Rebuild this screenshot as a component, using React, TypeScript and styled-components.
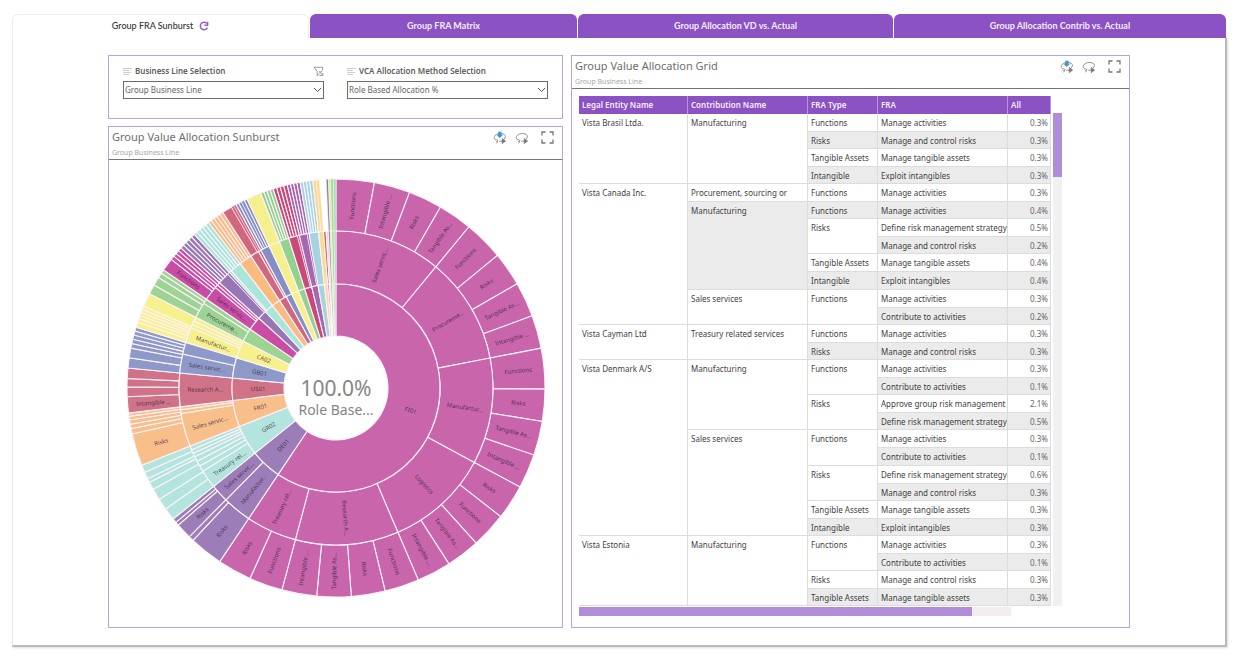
import React from 'react';
import styled, { createGlobalStyle } from 'styled-components';

const sans = '"Noto Sans", "Open Sans", sans-serif';
const purple = '#8a52c3';

const GlobalStyle = createGlobalStyle`
  *, *::before, *::after { box-sizing: border-box; }
  body { margin: 0; background: #fff; font-family: ${sans}; color: #444; }
  button, select { font: inherit; color: inherit; }
`;

const Page = styled.div`
  min-width: 1040px;
  padding: 14px 9px 9px 12px;
`;

const TabBar = styled.nav`
  display: grid;
  grid-template-columns: 297fr 267fr 315fr 332fr;
  gap: 1px;
  padding-right: 1px;
`;

const Tab = styled.button<{ $active?: boolean }>`
  display: flex;
  align-items: center;
  justify-content: center;
  gap: 6px;
  height: 24px;
  padding: 0 0 2px;
  border: 1px solid ${(p) => (p.$active ? '#eeeeee' : purple)};
  border-bottom: 0;
  border-radius: 6px 6px 0 0;
  background: ${(p) => (p.$active ? '#fff' : purple)};
  color: ${(p) => (p.$active ? '#333' : '#f4ecfb')};
  font-family: Lato, sans-serif;
  font-size: 9px;
  font-weight: ${(p) => (p.$active ? 500 : 700)};
  cursor: pointer;
`;

const Sheet = styled.main`
  display: grid;
  grid-template-columns: 455fr 559fr;
  gap: 8px;
  padding: 17px 95px;
  border-left: 1px solid #e9e9e9;
  border-right: 2px solid #b9b9b9;
  border-bottom: 2px solid #b9b9b9;
  box-shadow: 1px 1px 2px #ddd;
`;

const Column = styled.div`
  display: flex;
  flex-direction: column;
  gap: 7px;
  min-width: 0;
`;

const Panel = styled.section`
  flex: none;
  min-width: 0;
  border: 1px solid #b7a4df;
  background: #fff;
`;

const Filters = styled(Panel)`
  display: flex;
  gap: 23px;
  padding: 9px 14px 19px;
`;

const Filter = styled.div`
  flex: 1;
  display: flex;
  flex-direction: column;
  gap: 4px;
`;

const FilterHead = styled.div`
  display: flex;
  align-items: center;
  gap: 3px;
  height: 12px;
`;

const FilterLabel = styled.label`
  flex: 1;
  color: #5c5c5c;
  font-size: 8px;
  font-weight: 600;
  line-height: 12px;
`;

const SelectBox = styled.div`
  position: relative;
  display: flex;
`;

const Select = styled.select`
  appearance: none;
  width: 100%;
  height: 18px;
  padding: 0 16px 2px 1px;
  border: 1px solid #6b6b6b;
  border-radius: 0;
  background: #fff;
  color: #666;
  font-size: 8px;
`;

const Chevron = styled.svg`
  position: absolute;
  right: 2px;
  top: 6px;
  pointer-events: none;
`;

const PanelHead = styled.header`
  display: flex;
  justify-content: space-between;
  height: 33px;
  padding: 2px 8px 0 3px;
  border-bottom: 1px solid #77737e;
`;

const PanelTitle = styled.h2`
  margin: 0;
  color: #6e6e6e;
  font-size: 11px;
  font-weight: 400;
  line-height: 16px;
`;

const PanelSubtitle = styled.p`
  margin: 0;
  color: #a5a5a5;
  font-size: 7px;
  line-height: 15px;
`;

const Tools = styled.div`
  display: flex;
  align-items: flex-start;
  gap: 8px;
  padding-top: 2px;
`;

const Tool = styled.button`
  display: flex;
  padding: 0;
  border: 0;
  background: none;
  cursor: pointer;
  ${Tools} &:last-child { margin-left: 4px; }
`;

const ChartBody = styled.div`
  display: flex;
  justify-content: center;
  padding: 18px 0 29px;
`;

const Chart = styled.svg`
  width: 420px;
  height: 420px;
  font-family: ${sans};
`;

const GridBody = styled.div`
  display: grid;
  grid-template-columns: max-content 9px;
  column-gap: 2px;
  padding: 7px;
`;

const Table = styled.table`
  width: 472px;
  table-layout: fixed;
  border-collapse: separate;
  border-spacing: 0;
  font-size: 8px;
  line-height: 12px;
`;

const Th = styled.th`
  height: 18px;
  padding: 0 3px;
  border-right: 1px solid #b796dc;
  background: ${purple};
  color: #f6effc;
  font-weight: 600;
  text-align: left;
`;

const Row = styled.tr`
  height: 17px;
  &:nth-child(odd), &:nth-child(10n) { height: 18px; }
`;

const Td = styled.td<{ $shaded: boolean; $numeric?: boolean }>`
  padding: 3px ${(p) => (p.$numeric ? 2 : 0)}px 0 3px;
  overflow: hidden;
  border-right: 1px solid #dcdcdc;
  border-bottom: 1px solid #dcdcdc;
  background: ${(p) => (p.$shaded ? '#ebebeb' : '#fff')};
  color: ${(p) => (p.$numeric ? '#666' : '#3f3f3f')};
  text-align: ${(p) => (p.$numeric ? 'right' : 'left')};
  vertical-align: top;
  white-space: nowrap;
`;

const VerticalTrack = styled.div`
  margin-top: 17px;
  background: #f1f0f2;
`;

const VerticalThumb = styled.div`
  height: 64px;
  background: #b08dd9;
`;

const HorizontalTrack = styled.div`
  width: 432px;
  height: 9px;
  margin-top: 1px;
  background: #f1edf1;
`;

const HorizontalThumb = styled.div`
  width: 91%;
  height: 100%;
  background: #b08dd9;
`;

/* ---------- icons ---------- */

const RefreshIcon = () => (
  <svg width="10" height="10" viewBox="0 0 10 10" fill="none" stroke="#9460c8" strokeWidth="1.5">
    <path d="M8.4 6.600A3.700 3.700 0 1 1 7.700 2.500" />
    <path d="M8.600.8v3.400H5.400" />
  </svg>
);

const ListIcon = () => (
  <svg width="9" height="9" viewBox="0 0 9 9" stroke="#cfcfcf" strokeWidth="1">
    <path d="M0 1.5h9M0 3.5h6M0 5.5h8M0 7.5h6" />
  </svg>
);

const ClearFilterIcon = () => (
  <svg width="11" height="11" viewBox="0 0 11 11" fill="none" stroke="#8f8f8f" strokeWidth=".9">
    <path d="M9.200 4L9.800 1.300H1L4.200 5.300V9.600L6 8.200" />
    <path d="M9.600 4.600L5.800 7.400M6.400 5l3.400 4.600M6.400 9.600h3.400V7" />
  </svg>
);

const LassoIcon = ({ marked }: { marked?: boolean }) => (
  <svg width="14" height="14" viewBox="0 0 14 14" fill="none" stroke="#8d8d8d" strokeWidth="1">
    <path d="M2.900 9C1.300 8.100.9 6.900 1.400 5.600 2.200 3.600 4.600 2.500 7.600 2.500c3.200 0 5 1.300 4.800 3.200-.1 1-.7 1.900-1.700 2.700" />
    <path d="M3 8.800c1.200-.4 1.900.4 1.600 1.200-.3.800-1.300.8-1.700.2M4.500 10.300c0 .9-.4 1.500-1 2" />
    <path d="M6.200 10.200h6M9.300 7.600v5l3.200-2.500z" fill="#777" stroke="#777" strokeWidth=".8" />
    {marked && <path d="M5.200.8h3.300v3H10L6.800 7 3.400 3.800h1.800z" fill="#3d94cf" stroke="none" />}
  </svg>
);

const ExpandIcon = () => (
  <svg width="13" height="13" viewBox="0 0 13 13" fill="none" stroke="#777" strokeWidth="1.300">
    <path d="M1 4.500V1h3.500M8.500 1H12v3.500M12 8.500V12H8.500M4.500 12H1V8.500" />
  </svg>
);

const ToolIcons = () => (
  <Tools>
    <Tool aria-label="Lasso selection"><LassoIcon marked /></Tool>
    <Tool aria-label="Clear selection"><LassoIcon /></Tool>
    <Tool aria-label="Expand"><ExpandIcon /></Tool>
  </Tools>
);

/* ---------- sunburst ---------- */

type Slice = [end: number, label?: string];
type Group = { color: string; end: number; label?: string; mid: Slice[]; outer: Slice[] };

const fn = 'Functions';
const ta = 'Tangible As...';
const ig = 'Intangible ...';

/* Evenly spaced unlabelled slices between two angles. */
const even = (from: number, to: number, n: number): Slice[] =>
  Array.from({ length: n }, (_, i): Slice => [from + ((to - from) * (i + 1)) / n]);

const groups: Group[] = [
  {
    color: '#c865ab', end: 213.8, label: 'FI01',
    mid: [[39.5, 'Sales servic...'], [79, 'Procureme...'], [118.3, 'Manufactur...'], [156.8, 'Logistics'], [195, 'Research A...'], [213.8, 'Treasury rel...']],
    outer: [
      [10.6, fn], [20.6, ig], [30, 'Risks'], [39.5, ta], [50.6, fn], [60.1, 'Risks'], [69.8, ta], [79, ig],
      [90.3, fn], [99.2, 'Risks'], [108.7, ta], [118.3, ig], [128, 'Risks'], [137.9, fn], [147.3, ta], [156.8, ig],
      [166.4, fn], [175.8, 'Risks'], [185.3, ta], [195, ig], [204.3, fn], [213.8, 'Risks'],
    ],
  },
  {
    color: '#9c7db7', end: 231.2, label: 'DE01',
    mid: [[224.5, 'Manufactur...'], [231.2, 'Sales servic...']],
    outer: [[223.2, 'Risks'], [224.6], [229, 'Risks'], [230], [231.2]],
  },
  {
    color: '#b3e4dd', end: 248.3, label: 'GR02',
    mid: [[238, 'Treasury rel...'], [240.2], [242.2], [244], [245.4], [246.8], [248.3]],
    outer: [[234.6], [237.8], [241], [243.2], [244.3], [246.2], [248.3]],
  },
  {
    color: '#f9bf8b', end: 263.1, label: 'FR01',
    mid: [[260.6, 'Sales servic...'], [262], [263.1]],
    outer: [[257.3, 'Risks'], [258.8], [260], [261.2], [262.2], [263.1]],
  },
  {
    color: '#d17388', end: 275.5, label: 'US01',
    mid: [[275.5, 'Research A...']],
    outer: [[267.6, ig], [270.3], [272.6], [275.5]],
  },
  {
    color: '#8d99c8', end: 286.9, label: 'GB01',
    mid: [[282.5, 'Sales servic...'], [286.9]],
    outer: [[278.3], [281], [282.3], [283.5], [284.7], [285.8], [286.9]],
  },
  {
    color: '#f6f08d', end: 296.8, label: 'CA02',
    mid: [[292.6, 'Manufactur...'], [293.9], [295.3], [296.8]],
    outer: [[288.4], [289.4], [290.3], [291.2], [292.1], [293], [296.8]],
  },
  {
    color: '#9dd494', end: 304.4,
    mid: [[302.6, 'Procureme...'], [304.4]],
    outer: [[299.5], [301.9], [303.3], [304.4]],
  },
  {
    color: '#ca4da5', end: 312.1,
    mid: [[309.8, 'Sales servic...'], [311], [312.1]],
    outer: [[308, fn], [309.1], [310.1], [311.1], [312.1]],
  },
  { color: '#9676b4', end: 317.3, mid: [[316.5], [317.3]], outer: even(312.1, 317.3, 5) },
  { color: '#aae5da', end: 322.4, mid: [[318.2], [322.4]], outer: even(317.3, 322.4, 5) },
  { color: '#fbba80', end: 327.2, mid: [[327.2]], outer: even(322.4, 327.2, 5) },
  { color: '#d1677f', end: 331.4, mid: [[330.4], [331.4]], outer: [[330], [330.7], [331.4]] },
  { color: '#838fc5', end: 334.8, mid: [[334.8]], outer: even(331.4, 334.8, 4) },
  { color: '#f5f08c', end: 338.9, mid: [[338.9]], outer: [[338.9]] },
  { color: '#93d28d', end: 342.5, mid: [[342.5]], outer: even(338.9, 342.5, 4) },
  { color: '#c8497a', end: 346.5, mid: [[345.8], [346.5]], outer: even(342.5, 346.5, 4) },
  { color: '#a468ae', end: 350.1, mid: [[349.4], [350.1]], outer: even(346.5, 350.1, 4) },
  { color: '#a5d3e1', end: 353.6, mid: [[353.6]], outer: even(350.1, 353.6, 4) },
  { color: '#fbdb8e', end: 355.4, mid: [[355.4]], outer: [[354.6], [355.4]] },
  { color: '#d4646a', end: 356.4, mid: [[356.4]], outer: [] },
  { color: '#f3dcc0', end: 357.3, mid: [[357.3]], outer: [] },
  { color: '#7186b9', end: 357.9, mid: [[357.9]], outer: [[357.9]] },
  { color: '#f0e99a', end: 358.5, mid: [[358.5]], outer: [[358.5]] },
  { color: '#a9dc8a', end: 359.3, mid: [[359.3]], outer: [[359.3]] },
  { color: '#a3d9c3', end: 360, mid: [[360]], outer: [[360]] },
];

const radii = [52, 104, 157, 209];

const point = (r: number, deg: number) => {
  const a = (deg * Math.PI) / 180;
  return `${(r * Math.sin(a)).toFixed(2)} ${(-r * Math.cos(a)).toFixed(2)}`;
};

const Arc = ({ ring, from, to, color, label }: { ring: number; from: number; to: number; color: string; label?: string }) => {
  const r0 = radii[ring];
  const r1 = radii[ring + 1];
  const span = to - from;
  const large = span > 180 ? 1 : 0;
  const mid = (from + to) / 2;
  const [x, y] = point((r0 + r1) / 2, mid).split(' ');
  return (
    <g>
      <path
        d={`M${point(r0, from)}L${point(r1, from)}A${r1} ${r1} 0 ${large} 1 ${point(r1, to)}L${point(r0, to)}A${r0} ${r0} 0 ${large} 0 ${point(r0, from)}Z`}
        fill={color}
        stroke="#fdf3fb"
        strokeWidth={span < 0.85 ? 0.5 : 1.1}
      />
      {label && (
        <text
          transform={`translate(${x} ${y}) rotate(${mid < 180 ? mid - 90 : mid + 90})`}
          textAnchor="middle"
          dominantBaseline="central"
          fontSize="6"
          fill="#3a2440"
          fillOpacity=".85"
        >
          {label}
        </text>
      )}
    </g>
  );
};

const Sunburst = () => (
  <Chart viewBox="-210 -210 420 420" role="img" aria-label="Group value allocation">
    {groups.map((g, i) => {
      const start = i ? groups[i - 1].end : 0;
      const ring = (slices: Slice[], level: number) =>
        slices.map(([end, label], k) => (
          <Arc key={`${level}-${k}`} ring={level} from={k ? slices[k - 1][0] : start} to={end} color={g.color} label={label} />
        ));
      return (
        <g key={i}>
          {ring(g.outer, 2)}
          {ring(g.mid, 1)}
          <Arc ring={0} from={start} to={g.end} color={g.color} label={g.label} />
        </g>
      );
    })}
    <text y="8" textAnchor="middle" fontSize="21" fill="#858585">100.0%</text>
    <text y="27" textAnchor="middle" fontSize="14" fill="#858585">Role Base...</text>
  </Chart>
);

/* ---------- grid ---------- */

type Cell = [text: string, span: number];
type GridRow = { entity?: Cell; contribution?: Cell; type?: Cell; fra: string; all: string };

const rows: GridRow[] = [
  { entity: ['Vista Brasil Ltda.', 4], contribution: ['Manufacturing', 4], type: ['Functions', 1], fra: 'Manage activities', all: '0.3%' },
  { type: ['Risks', 1], fra: 'Manage and control risks', all: '0.3%' },
  { type: ['Tangible Assets', 1], fra: 'Manage tangible assets', all: '0.3%' },
  { type: ['Intangible', 1], fra: 'Exploit intangibles', all: '0.3%' },
  { entity: ['Vista Canada Inc.', 8], contribution: ['Procurement, sourcing or', 1], type: ['Functions', 1], fra: 'Manage activities', all: '0.3%' },
  { contribution: ['Manufacturing', 5], type: ['Functions', 1], fra: 'Manage activities', all: '0.4%' },
  { type: ['Risks', 2], fra: 'Define risk management strategy', all: '0.5%' },
  { fra: 'Manage and control risks', all: '0.2%' },
  { type: ['Tangible Assets', 1], fra: 'Manage tangible assets', all: '0.4%' },
  { type: ['Intangible', 1], fra: 'Exploit intangibles', all: '0.4%' },
  { contribution: ['Sales services', 2], type: ['Functions', 2], fra: 'Manage activities', all: '0.3%' },
  { fra: 'Contribute to activities', all: '0.2%' },
  { entity: ['Vista Cayman Ltd', 2], contribution: ['Treasury related services', 2], type: ['Functions', 1], fra: 'Manage activities', all: '0.3%' },
  { type: ['Risks', 1], fra: 'Manage and control risks', all: '0.3%' },
  { entity: ['Vista Denmark A/S', 10], contribution: ['Manufacturing', 4], type: ['Functions', 2], fra: 'Manage activities', all: '0.3%' },
  { fra: 'Contribute to activities', all: '0.1%' },
  { type: ['Risks', 2], fra: 'Approve group risk management', all: '2.1%' },
  { fra: 'Define risk management strategy', all: '0.5%' },
  { contribution: ['Sales services', 6], type: ['Functions', 2], fra: 'Manage activities', all: '0.3%' },
  { fra: 'Contribute to activities', all: '0.1%' },
  { type: ['Risks', 2], fra: 'Define risk management strategy', all: '0.6%' },
  { fra: 'Manage and control risks', all: '0.3%' },
  { type: ['Tangible Assets', 1], fra: 'Manage tangible assets', all: '0.3%' },
  { type: ['Intangible', 1], fra: 'Exploit intangibles', all: '0.3%' },
  { entity: ['Vista Estonia', 4], contribution: ['Manufacturing', 4], type: ['Functions', 2], fra: 'Manage activities', all: '0.3%' },
  { fra: 'Contribute to activities', all: '0.1%' },
  { type: ['Risks', 1], fra: 'Manage and control risks', all: '0.3%' },
  { type: ['Tangible Assets', 1], fra: 'Manage tangible assets', all: '0.3%' },
];

const AllocationTable = () => (
  <Table>
    <colgroup>
      <col width="109" />
      <col width="120" />
      <col width="70" />
      <col width="130" />
      <col width="43" />
    </colgroup>
    <thead>
      <tr>
        {['Legal Entity Name', 'Contribution Name', 'FRA Type', 'FRA', 'All'].map((h) => (
          <Th key={h} scope="col">{h}</Th>
        ))}
      </tr>
    </thead>
    <tbody>
      {rows.map((row, i) => {
        const shaded = i % 2 === 1;
        return (
          <Row key={i}>
            {[row.entity, row.contribution, row.type].map(
              (cell, k) => cell && <Td key={k} rowSpan={cell[1]} $shaded={shaded}>{cell[0]}</Td>,
            )}
            <Td $shaded={shaded}>{row.fra}</Td>
            <Td $shaded={shaded} $numeric>{row.all}</Td>
          </Row>
        );
      })}
    </tbody>
  </Table>
);

const SelectFilter = ({ id, label, value, clearable }: { id: string; label: string; value: string; clearable?: boolean }) => (
  <Filter>
    <FilterHead>
      <ListIcon />
      <FilterLabel htmlFor={id}>{label}</FilterLabel>
      {clearable && <Tool aria-label="Clear filter"><ClearFilterIcon /></Tool>}
    </FilterHead>
    <SelectBox>
      <Select id={id}>
        <option>{value}</option>
      </Select>
      <Chevron width="9" height="6" viewBox="0 0 9 6" fill="none" stroke="#555">
        <path d="M1 1l3.500 3.500L8 1" />
      </Chevron>
    </SelectBox>
  </Filter>
);

const PanelHeader = ({ title }: { title: string }) => (
  <PanelHead>
    <div>
      <PanelTitle>{title}</PanelTitle>
      <PanelSubtitle>Group Business Line</PanelSubtitle>
    </div>
    <ToolIcons />
  </PanelHead>
);

export default function App() {
  return (
    <Page>
      <GlobalStyle />
      <TabBar>
        <Tab $active>Group FRA Sunburst <RefreshIcon /></Tab>
        <Tab>Group FRA Matrix</Tab>
        <Tab>Group Allocation VD vs. Actual</Tab>
        <Tab>Group Allocation Contrib vs. Actual</Tab>
      </TabBar>
      <Sheet>
        <Column>
          <Filters>
            <SelectFilter id="business-line" label="Business Line Selection" value="Group Business Line" clearable />
            <SelectFilter id="vca-method" label="VCA Allocation Method Selection" value="Role Based Allocation %" />
          </Filters>
          <Panel>
            <PanelHeader title="Group Value Allocation Sunburst" />
            <ChartBody><Sunburst /></ChartBody>
          </Panel>
        </Column>
        <Panel>
          <PanelHeader title="Group Value Allocation Grid" />
          <GridBody>
            <AllocationTable />
            <VerticalTrack><VerticalThumb /></VerticalTrack>
            <HorizontalTrack><HorizontalThumb /></HorizontalTrack>
          </GridBody>
        </Panel>
      </Sheet>
    </Page>
  );
}
